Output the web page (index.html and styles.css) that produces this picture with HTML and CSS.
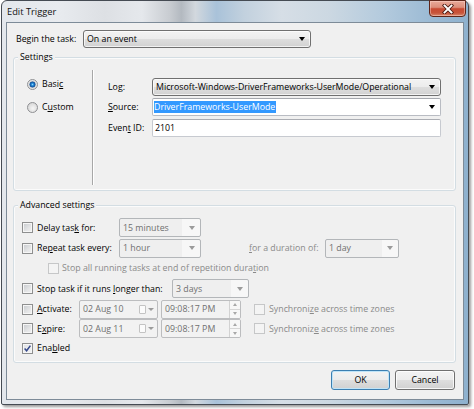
FILE: index.html
```html
<!DOCTYPE html>
<html>
<head>
<meta charset="utf-8">
<title>Edit Trigger</title>
<link rel="stylesheet" href="styles.css">
</head>
<body>
<div class="window">
  <div class="titlebar">
    <span class="title">Edit Trigger</span>
    <div class="close">
      <svg width="12" height="10" viewBox="0 0 12 10">
        <path d="M2.5 1.5 L9.5 8.5 M9.5 1.5 L2.5 8.5" stroke="#4a1a12" stroke-width="3.6" stroke-linecap="square" fill="none"/>
        <path d="M2.5 1.5 L9.5 8.5 M9.5 1.5 L2.5 8.5" stroke="#ffffff" stroke-width="1.9" stroke-linecap="square" fill="none"/>
      </svg>
    </div>
  </div>
  <div class="client">
    <div class="begin-row">
      <span class="begin-label">Begin the task:</span>
      <div class="combo btn w-begin"><span class="txt">On an event</span><span class="arrow"></span></div>
    </div>

    <div class="group g-settings">
      <div class="legend">Settings</div>
      <div class="settings-body">
        <div class="radios">
          <div class="radio-row"><span class="rb checked"></span><span>Basi<u>c</u></span></div>
          <div class="radio-row second"><span class="rb"></span><span>C<u>u</u>stom</span></div>
        </div>
        <div class="vsep"></div>
        <div class="fields">
          <div class="field-row"><span class="field-label">Lo<u>g</u>:</span><div class="combo btn w-field"><span class="txt">Microsoft-Windows-DriverFrameworks-UserMode/Operational</span><span class="arrow"></span></div></div>
          <div class="field-row r-source"><span class="field-label"><u>S</u>ource:</span><div class="combo edit w-field"><span class="txt"><span class="sel">DriverFrameworks-UserMode</span></span><span class="arrow"></span></div></div>
          <div class="field-row r-event"><span class="field-label">Even<u>t</u> ID:</span><div class="textbox w-field">2101</div></div>
        </div>
      </div>
    </div>

    <div class="group g-adv">
      <div class="legend">Advanced settings</div>
      <div class="adv-body">
        <div class="adv-row h21">
          <span class="cb"></span><span class="lbl l-82">Delay tas<u>k</u> for:</span>
          <div class="combo dis w-82"><span class="txt">15 minutes</span><span class="arrow grey"></span></div>
        </div>
        <div class="adv-row h20">
          <span class="cb"></span><span class="lbl l-82">Re<u>p</u>eat task every:</span>
          <div class="combo dis w-82"><span class="txt">1 hour</span><span class="arrow grey"></span></div>
          <span class="lbl dim l-dur"><u>f</u>or a duration of:</span>
          <div class="combo dis w-74"><span class="txt">1 day</span><span class="arrow grey"></span></div>
        </div>
        <div class="adv-row h20">
          <span class="cb disabled indent"></span><span class="lbl dim">Stop all running tasks at end of repetition dura<u>t</u>ion</span>
        </div>
        <div class="adv-row h21">
          <span class="cb"></span><span class="lbl l-135">Stop task if it runs <u>l</u>onger than:</span>
          <div class="combo dis w-77"><span class="txt">3 days</span><span class="arrow grey"></span></div>
        </div>
        <div class="adv-row h20">
          <span class="cb"></span><span class="lbl l-42"><u>A</u>ctivate:</span>
          <div class="picker w-date"><span class="txt">02 Aug 10</span><span class="cal"></span><span class="arrow grey small"></span></div>
          <div class="picker w-time"><span class="txt">09:08:17 PM</span><span class="spin"><span class="up"></span><span class="down"></span></span></div>
          <span class="cb disabled sync"></span><span class="lbl dim">Synchroni<u>z</u>e across time zones</span>
        </div>
        <div class="adv-row h19">
          <span class="cb"></span><span class="lbl l-42">E<u>x</u>pire:</span>
          <div class="picker w-date"><span class="txt">02 Aug 11</span><span class="cal"></span><span class="arrow grey small"></span></div>
          <div class="picker w-time"><span class="txt">09:08:17 PM</span><span class="spin"><span class="up"></span><span class="down"></span></span></div>
          <span class="cb disabled sync"></span><span class="lbl dim">Synchroniz<u>e</u> across time zones</span>
        </div>
        <div class="adv-row h20">
          <span class="cb checked">
            <svg width="9" height="9" viewBox="0 0 9 9"><path d="M1.6 4.6 L3.6 6.8 L7.4 1.6" stroke="#34478a" stroke-width="1.5" fill="none"/></svg>
          </span><span class="lbl">Ena<u>b</u>led</span>
        </div>
      </div>
    </div>

    <div class="buttons">
      <div class="button default">OK</div>
      <div class="button w-cancel">Cancel</div>
    </div>
  </div>
</div>
</body>
</html>
```

FILE: styles.css
```css
* { box-sizing: border-box; }
html, body { margin: 0; padding: 0; background: #ffffff; }
body {
  width: 474px;
  height: 409px;
  overflow: hidden;
  font-family: "Open Sans", "Liberation Sans", sans-serif;
  font-size: 8.8px;
  color: #000;
}
u { text-decoration: underline; text-underline-offset: 1px; text-decoration-thickness: 1px; }

.window {
  margin-left: 1px;
  width: 468px;
  height: 405px;
  border: 1px solid #454b53;
  border-radius: 6px 6px 2px 2px;
  background: linear-gradient(90deg, #e3e7ec 0%, #e8ebef 12%, #dde0e4 22%, #e5e8ec 30%, #c8ccd1 36%, #b3b9c0 38.5%, #d2d8de 41.5%, #a9c2d9 46%, #c2d1de 52%, #d6dee6 60%, #ccd8e2 70%, #b3cadd 82%, #9bbad4 92%, #8eb1ce 100%);
  box-shadow: 2px 2px 3px rgba(0, 0, 0, 0.4);
  display: flex;
  flex-direction: column;
}

.titlebar {
  height: 21px;
  flex: none;
  display: flex;
  align-items: flex-start;
  justify-content: space-between;
  padding-left: 5px;
}
.title {
  line-height: 21px;
  font-size: 9.3px;
  color: #111;
}
.close {
  width: 37px;
  height: 17px;
  margin-top: -1px;
  margin-right: 2px;
  border: 1px solid #5e2519;
  border-radius: 0 0 4px 4px;
  background: linear-gradient(#e9aa9a 0%, #dc8e7b 42%, #c84a32 52%, #c7553b 80%, #d88a70 100%);
  box-shadow: inset 0 0 0 1px rgba(255, 220, 210, 0.45);
  display: flex;
  align-items: center;
  justify-content: center;
}

.client {
  flex: 1;
  margin: 0 4px 4px 4px;
  border: 1px solid #7d8b98;
  background: #f0f0f0;
}

.begin-row {
  margin-top: 7px;
  height: 18px;
  display: flex;
  align-items: center;
}
.begin-label { width: 76px; padding-left: 9px; }

/* combos */
.combo {
  height: 18px;
  display: flex;
  align-items: center;
  padding-left: 3px;
  border-radius: 3px;
  flex: none;
  white-space: nowrap;
  overflow: hidden;
}
.combo .txt { flex: 1; overflow: hidden; }
.arrow {
  width: 0;
  height: 0;
  border-left: 3.5px solid transparent;
  border-right: 3.5px solid transparent;
  border-top: 4px solid #000;
  margin-right: 5px;
  flex: none;
}
.arrow.grey { border-top-color: #9b9b9b; }
.arrow.small { border-left-width: 3px; border-right-width: 3px; border-top-width: 3px; margin-right: 3px; }

.btn {
  border: 1px solid #707070;
  background: linear-gradient(#f3f3f3 0%, #ececec 50%, #dedede 50%, #d1d1d1 100%);
  box-shadow: inset 0 0 0 1px rgba(255, 255, 255, 0.7);
}
.edit {
  border: 1px solid #b9bcc3;
  border-top-color: #a5a8ae;
  background: #fff;
  border-radius: 2px;
  padding-left: 1px;
}
.sel {
  background: #3399ff;
  color: #fff;
  padding: 1px 1px 1px 0;
}
.textbox {
  height: 18px;
  border: 1px solid #c7cad0;
  border-top-color: #abadb3;
  background: #fff;
  border-radius: 2px;
  padding-left: 2px;
  line-height: 16px;
  flex: none;
}
.dis {
  height: 19px;
  border: 1px solid #b3b6b9;
  border-radius: 2px;
  background: linear-gradient(90deg, #efefef 0%, #efefef 78%, #f7f7f7 78%, #f7f7f7 100%);
  color: #707070;
}

.w-begin { width: 228px; }
.w-field { width: 289px; }
.w-82 { width: 82px; }
.w-74 { width: 74px; }
.w-77 { width: 77px; }

/* group boxes */
.group {
  margin-left: 6px;
  width: 443px;
  border: 1px solid #d3dde3;
  border-radius: 3px;
  box-shadow: inset 0 0 0 1px #fbfbfb;
}
.g-settings { margin-top: 9px; height: 134px; }
.g-adv { margin-top: 14px; height: 158px; }
.legend {
  width: max-content;
  height: 12px;
  line-height: 12px;
  margin: -7px 0 0 4px;
  padding: 0 2px;
  background: #f0f0f0;
}

.settings-body {
  height: 127px;
  display: flex;
}
.radios {
  width: 78px;
  padding-top: 13px;
  padding-left: 13px;
}
.radio-row {
  height: 16px;
  display: flex;
  align-items: center;
  gap: 4px;
}
.radio-row.second { margin-top: 7px; }
.rb {
  width: 11px;
  height: 11px;
  border-radius: 50%;
  border: 1px solid #8f9093;
  background: radial-gradient(circle at 55% 60%, #f6f6f6 0%, #dadada 70%, #c9c9c9 100%);
  flex: none;
}
.rb.checked {
  background: radial-gradient(circle at 50% 50%, #8fdcff 0px, #2a8fdb 1.1px, #0d4c97 2.7px, #d4d4d4 3.3px, #efefef 4.6px);
}
.vsep {
  width: 2px;
  margin-top: 7px;
  height: 115px;
  border-left: 1px solid #a7a7a7;
  border-right: 1px solid #ffffff;
}
.fields {
  padding-top: 15px;
  padding-left: 14px;
}
.field-row {
  height: 18px;
  display: flex;
  align-items: center;
}
.field-row.r-source { margin-top: 2px; }
.field-row.r-event { margin-top: 3px; }
.field-label { width: 44px; }

/* advanced */
.adv-body { padding-top: 6px; padding-left: 8px; }
.adv-row {
  display: flex;
  align-items: center;
  white-space: nowrap;
}
.h21 { height: 21px; }
.h20 { height: 20px; }
.h19 { height: 19px; }
.cb {
  width: 11px;
  height: 11px;
  border: 1px solid #8e8f8f;
  background: linear-gradient(135deg, #c6c9cd 0%, #e4e5e6 60%, #f1f1f1 100%);
  box-shadow: inset 0 0 0 1px #f6f6f6;
  margin-right: 4px;
  flex: none;
  display: flex;
  align-items: center;
  justify-content: center;
}
.cb.disabled {
  border-color: #c6c7c8;
  background: #f4f4f4;
  box-shadow: none;
}
.cb.checked { background: linear-gradient(135deg, #dfe1e4 0%, #f3f3f3 100%); }
.cb.checked svg { display: block; }
.cb.indent { margin-left: 26px; margin-right: 3px; }
.cb.sync { margin-left: 13px; margin-right: 4px; }
.lbl { flex: none; }
.dim { color: #8a8a8a; }
.l-82 { width: 82px; }
.l-135 { width: 135px; }
.l-42 { width: 42px; }
.l-dur { margin-left: 48px; width: 76px; }

.picker {
  height: 19px;
  border: 1px solid #bcbdbf;
  border-radius: 2px;
  background: #f2f2f2;
  color: #707070;
  display: flex;
  align-items: center;
  padding-left: 3px;
  flex: none;
  overflow: hidden;
}
.picker .txt { flex: 1; }
.w-date { width: 79px; }
.w-time { width: 80px; margin-left: 3px; }
.cal {
  width: 7px;
  height: 9px;
  border: 1px solid #c3c3c3;
  border-radius: 1px;
  background: #fbfbfb;
  margin-right: 2px;
  flex: none;
}
.spin {
  width: 11px;
  height: 17px;
  display: flex;
  flex-direction: column;
  border-left: 1px solid #d2d2d2;
  flex: none;
}
.spin span {
  flex: 1;
  display: flex;
  align-items: center;
  justify-content: center;
  background: #f7f7f7;
}
.spin .up { border-bottom: 1px solid #d6d6d6; }
.spin .up::after {
  content: "";
  border-left: 2.5px solid transparent;
  border-right: 2.5px solid transparent;
  border-bottom: 3px solid #a8a8a8;
}
.spin .down::after {
  content: "";
  border-left: 2.5px solid transparent;
  border-right: 2.5px solid transparent;
  border-top: 3px solid #a8a8a8;
}

/* buttons */
.buttons {
  margin-top: 7px;
  padding-right: 8px;
  display: flex;
  justify-content: flex-end;
  gap: 5px;
}
.button {
  width: 59px;
  height: 20px;
  border: 1px solid #707070;
  border-radius: 3px;
  background: linear-gradient(#f3f3f3 0%, #ececec 50%, #dedede 50%, #d1d1d1 100%);
  box-shadow: inset 0 0 0 1px rgba(255, 255, 255, 0.8);
  display: flex;
  align-items: center;
  justify-content: center;
}
.button.default {
  border-color: #3c7fb1;
  box-shadow: inset 0 0 0 1px #bfe4f8;
}
.w-cancel { width: 60px; }
```
